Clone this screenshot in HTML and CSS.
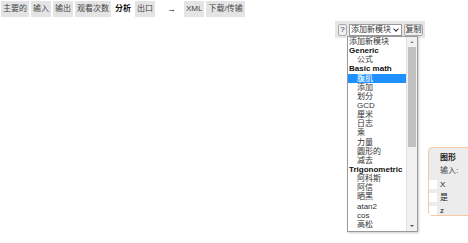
FILE: index.html
```html
<!DOCTYPE html>
<html lang="zh">
<head>
    <meta charset="UTF-8">
    <title>分析</title>
    <link rel="stylesheet" href="styles.css">
</head>
<body>
    <div class="tabs">
        <div class="tab">主要的</div>
        <div class="tab">输入</div>
        <div class="tab">输出</div>
        <div class="tab">观看次数</div>
        <div class="tab active">分析</div>
        <div class="tab">出口</div>
        <div class="tab arrow">&#8594;</div>
        <div class="tab">XML</div>
        <div class="tab">下载/传输</div>
    </div>
    <div class="canvas">
        <div class="toolbar">
            <button class="btn help">?</button>
            <div class="select">添加新模块<span class="caret"></span></div>
            <button class="btn copy">复制</button>
        </div>
        <div class="dropdown">
            <div class="options">
                <div class="opt">添加新模块</div>
                <div class="group">Generic</div>
                <div class="opt sub">公式</div>
                <div class="group">Basic math</div>
                <div class="opt sub selected">腹肌</div>
                <div class="opt sub">添加</div>
                <div class="opt sub">划分</div>
                <div class="opt sub">GCD</div>
                <div class="opt sub">厘米</div>
                <div class="opt sub">日志</div>
                <div class="opt sub">乘</div>
                <div class="opt sub">力量</div>
                <div class="opt sub">圆形的</div>
                <div class="opt sub">减去</div>
                <div class="group">Trigonometric</div>
                <div class="opt sub">阿科斯</div>
                <div class="opt sub">阿信</div>
                <div class="opt sub">晒黑</div>
                <div class="opt sub">atan2</div>
                <div class="opt sub">cos</div>
                <div class="opt sub">高松</div>
            </div>
            <div class="scrollbar">
                <div class="arrow-up"></div>
                <div class="thumb"></div>
                <div class="arrow-down"></div>
            </div>
        </div>
        <div class="node">
            <div class="node-title">图形</div>
            <div class="node-label">输入:</div>
            <div class="port"><span class="box"></span>X</div>
            <div class="port"><span class="box"></span>是</div>
            <div class="port"><span class="box"></span>z</div>
        </div>
    </div>
</body>
</html>
```

FILE: styles.css
```css
body {
    margin: 0;
    padding: 0;
    background-color: #fff;
    font-family: "Liberation Sans", Arial, "Noto Sans CJK SC", sans-serif;
    font-size: 8px;
    color: #333;
    width: 468px;
    height: 243px;
    overflow: hidden;
}

.tabs {
    display: flex;
    padding: 1px 0 0 1px;
    height: 17px;
    box-sizing: border-box;
}
.tab {
    flex-shrink: 0;
    white-space: nowrap;
    background-color: #e4e4e4;
    border-right: 2px solid #fff;
    padding: 0 2px;
    font-size: 8px;
    line-height: 16px;
    color: #444;
}
.tab.active {
    background-color: #fff;
    font-weight: bold;
    color: #111;
}
.tab.arrow {
    background-color: #fff;
    padding: 0 6px 0 10px;
    font-size: 9px;
    color: #111;
}

.canvas {
    position: relative;
    height: 226px;
}

.toolbar {
    position: absolute;
    left: 335px;
    top: 4px;
    width: 90px;
    height: 17px;
    background-color: #e6e6e6;
    display: flex;
    align-items: center;
    gap: 2px;
    padding: 0 2px 0 3px;
    box-sizing: border-box;
}
.btn {
    font-family: inherit;
    font-size: 8px;
    height: 12px;
    padding: 0;
    margin: 0;
    border: 1px solid #aaa;
    border-radius: 2px;
    background-color: #f0f0f0;
    color: #333;
    line-height: 10px;
    box-sizing: border-box;
    text-align: center;
}
.btn.help {
    width: 9px;
}
.btn.copy {
    width: 19px;
}
.select {
    width: 54px;
    height: 12px;
    border: 1px solid #999;
    background-color: #fff;
    box-sizing: border-box;
    font-size: 8px;
    line-height: 10px;
    padding-left: 1px;
    position: relative;
    color: #333;
}
.caret {
    position: absolute;
    right: 3px;
    top: 2px;
    width: 3px;
    height: 3px;
    border-right: 1px solid #333;
    border-bottom: 1px solid #333;
    transform: rotate(45deg);
}

.dropdown {
    position: absolute;
    left: 347px;
    top: 19px;
    width: 71px;
    height: 196px;
    background-color: #fff;
    border: 1px solid #999;
    box-sizing: border-box;
    display: flex;
    box-shadow: 1px 1px 2px rgba(0, 0, 0, 0.2);
    overflow: hidden;
}
.options {
    flex: 1;
}
.opt, .group {
    height: 9.15px;
    line-height: 9px;
    padding-left: 1px;
    white-space: nowrap;
    color: #333;
}
.group {
    font-weight: bold;
    color: #111;
}
.opt.sub {
    padding-left: 9px;
}
.opt.selected {
    background-color: #1e90ff;
    color: #fff;
}
.scrollbar {
    width: 10px;
    background-color: #f1f1f1;
    border-left: 1px solid #e0e0e0;
    display: flex;
    flex-direction: column;
    align-items: center;
}
.arrow-up, .arrow-down {
    width: 0;
    height: 0;
    border-left: 2px solid transparent;
    border-right: 2px solid transparent;
    margin: 4px 0;
}
.arrow-up {
    border-bottom: 2px solid #888;
}
.arrow-down {
    margin-top: auto;
    border-top: 2px solid #555;
}
.thumb {
    width: 8px;
    height: 100px;
    background-color: #c1c1c1;
}

.node {
    position: absolute;
    left: 428px;
    top: 130px;
    width: 50px;
    height: 69px;
    background-color: #ececec;
    border: 1px solid #f8c9a0;
    border-radius: 4px;
    box-sizing: border-box;
    padding: 4px 0 0 0;
}
.node-title {
    font-weight: bold;
    padding-left: 11px;
    line-height: 12px;
    color: #222;
}
.node-label {
    padding-left: 11px;
    line-height: 14px;
    color: #444;
}
.port {
    display: flex;
    align-items: center;
    gap: 3px;
    line-height: 13px;
    color: #222;
}
.box {
    width: 8px;
    height: 9px;
    background-color: #fff;
}
```
